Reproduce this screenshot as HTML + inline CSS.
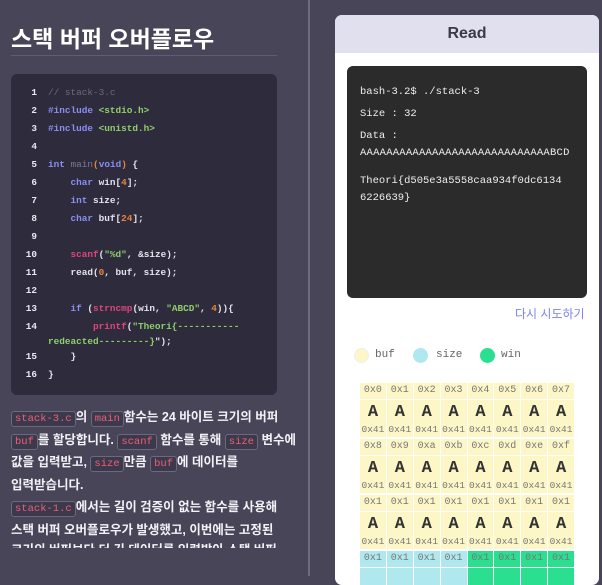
<!DOCTYPE html>
<html><head><meta charset="utf-8"><style>
*{margin:0;padding:0;box-sizing:border-box}
body{width:602px;height:576px;overflow:hidden;background:#494559;font-family:"Liberation Sans","Noto Sans CJK KR",sans-serif;position:relative}
.div{position:absolute;left:308px;top:0;width:2px;height:576px;background:#6d6a80}
h1{position:absolute;left:11px;top:20px;font-size:23px;color:#fff;font-weight:bold;letter-spacing:0px}
.hr{position:absolute;left:11px;top:55px;width:266px;height:1px;background:#605c72}
.code{position:absolute;left:11px;top:74px;width:266px;height:321px;background:#2d2b3c;border-radius:6px;font-family:"Liberation Mono",monospace;font-size:9.4px;color:#e4e4ee;font-weight:bold}
.ln{position:absolute;left:0;width:26px;text-align:right;color:#e8e8f0}
.cl{position:absolute;left:37px;white-space:pre}
.cm{color:#6c6a80;font-weight:normal}.kw{color:#8a8ff0}.st{color:#8fcf6a}.nm{color:#e8843a}.fn{color:#e0457b}.mn{color:#7d7a90;font-weight:normal}
.p{position:absolute;left:11px;width:290px;color:#f2f2f6;font-size:12.5px;font-weight:bold;line-height:20.5px;white-space:nowrap;overflow:hidden}
.ic{font-family:"Liberation Mono",monospace;font-size:10.5px;color:#ec5f72;font-weight:normal;border:1px solid #6c6880;border-radius:3px;padding:1px 3px;background:#3d394d}
.card{position:absolute;left:335px;top:15px;width:264px;height:570px;background:#fff;border-radius:7px;overflow:hidden}
.hd{height:38px;background:#e1e0ee;text-align:center;font-size:16px;font-weight:bold;color:#3a3a48;line-height:38px}
.term{position:absolute;left:12px;top:51px;width:240px;height:232px;background:#2b2b2b;border-radius:6px;font-family:"Liberation Mono",monospace;font-size:10.5px;color:#eee}
.term div{position:absolute;left:13px;white-space:pre}
.retry{position:absolute;left:180px;top:290px;color:#7e82f2;font-size:12px}
.lg{position:absolute;top:333px;width:15px;height:15px;border-radius:50%}
.lt{position:absolute;top:334px;font-family:"Liberation Mono",monospace;font-size:11px;color:#666}
.grid{position:absolute;left:25px;top:368px;width:214px;display:grid;grid-template-columns:repeat(8,1fr);column-gap:1px;background:#fff}
.h{height:16px;font-family:"Liberation Mono",monospace;font-size:10px;color:#777;text-align:center;line-height:16px;overflow:hidden;margin-bottom:1px}
.a{height:37px;font-family:"Liberation Mono",monospace;text-align:center;margin-bottom:2px;overflow:hidden}
.a b{display:block;font-size:17px;color:#333;line-height:22px;padding-top:2px}
.a i{display:block;font-style:normal;font-size:9.5px;color:#777;line-height:12px}
.y{background:#fdf6c6}.c{background:#b0e8f0}.g{background:#2adf90}
</style></head><body>
<div class="div"></div>
<h1>스택 버퍼 오버플로우</h1>
<div class="hr"></div>
<div class="code">
<div class="ln" style="top:13px">1</div><div class="cl" style="top:13px"><span class="cm">// stack-3.c</span></div>
<div class="ln" style="top:31px">2</div><div class="cl" style="top:31px"><span class="kw">#include</span> <span class="st">&lt;stdio.h&gt;</span></div>
<div class="ln" style="top:49px">3</div><div class="cl" style="top:49px"><span class="kw">#include</span> <span class="st">&lt;unistd.h&gt;</span></div>
<div class="ln" style="top:67px">4</div>
<div class="ln" style="top:85px">5</div><div class="cl" style="top:85px"><span class="kw">int</span> <span class="mn">main</span><span class="nm">(</span><span class="kw">void</span><span class="nm">)</span> {</div>
<div class="ln" style="top:103px">6</div><div class="cl" style="top:103px">    <span class="kw">char</span> win[<span class="nm">4</span>];</div>
<div class="ln" style="top:121px">7</div><div class="cl" style="top:121px">    <span class="kw">int</span> size;</div>
<div class="ln" style="top:139px">8</div><div class="cl" style="top:139px">    <span class="kw">char</span> buf[<span class="nm">24</span>];</div>
<div class="ln" style="top:157px">9</div>
<div class="ln" style="top:175px">10</div><div class="cl" style="top:175px">    <span class="fn">scanf</span>(<span class="st">"%d"</span>, &amp;size);</div>
<div class="ln" style="top:193px">11</div><div class="cl" style="top:193px">    read(<span class="nm">0</span>, buf, size);</div>
<div class="ln" style="top:211px">12</div>
<div class="ln" style="top:229px">13</div><div class="cl" style="top:229px">    <span class="kw">if</span> (<span class="fn">strncmp</span>(win, <span class="st">"ABCD"</span>, <span class="nm">4</span>)){</div>
<div class="ln" style="top:247px">14</div><div class="cl" style="top:247px">        <span class="fn">printf</span>(<span class="st">"Theori{-----------</span></div>
<div class="cl" style="top:262px"><span class="st">redeacted---------}</span>");</div>
<div class="ln" style="top:277px">15</div><div class="cl" style="top:277px">    }</div>
<div class="ln" style="top:295px">16</div><div class="cl" style="top:295px">}</div>
</div>
<div class="p" style="top:407px;height:86px"><span class="ic">stack-3.c</span>의 <span class="ic">main</span>함수는 24 바이트 크기의 버퍼<br><span class="ic">buf</span>를 할당합니다. <span class="ic">scanf</span> 함수를 통해 <span class="ic">size</span> 변수에<br>값을 입력받고, <span class="ic">size</span>만큼 <span class="ic">buf</span>에 데이터를<br>입력받습니다.</div>
<div class="p" style="top:497px;height:51px"><span class="ic">stack-1.c</span>에서는 길이 검증이 없는 함수를 사용해<br>스택 버퍼 오버플로우가 발생했고, 이번에는 고정된<br>크기의 버퍼보다 더 긴 데이터를 입력받아 스택 버퍼</div>
<div class="card">
<div class="hd">Read</div>
<div class="term">
<div style="top:20px">bash-3.2$ ./stack-3</div>
<div style="top:42px">Size : 32</div>
<div style="top:64px">Data :</div>
<div style="top:81px;letter-spacing:0.25px">AAAAAAAAAAAAAAAAAAAAAAAAAAAAABCD</div>
<div style="top:109px">Theori{d505e3a5558caa934f0dc6134</div>
<div style="top:126px">6226639}</div>
</div>
<div class="retry">다시 시도하기</div>
<div class="lg" style="left:19px;background:#fdf6c6;border:1px solid #eee"></div><div class="lt" style="left:40px">buf</div>
<div class="lg" style="left:78px;background:#b0e8f0"></div><div class="lt" style="left:101px">size</div>
<div class="lg" style="left:145px;background:#2adf90"></div><div class="lt" style="left:166px">win</div>
<div class="grid">
<div class="h y">0x0</div><div class="h y">0x1</div><div class="h y">0x2</div><div class="h y">0x3</div><div class="h y">0x4</div><div class="h y">0x5</div><div class="h y">0x6</div><div class="h y">0x7</div>
<div class="a y"><b>A</b><i>0x41</i></div><div class="a y"><b>A</b><i>0x41</i></div><div class="a y"><b>A</b><i>0x41</i></div><div class="a y"><b>A</b><i>0x41</i></div><div class="a y"><b>A</b><i>0x41</i></div><div class="a y"><b>A</b><i>0x41</i></div><div class="a y"><b>A</b><i>0x41</i></div><div class="a y"><b>A</b><i>0x41</i></div>
<div class="h y">0x8</div><div class="h y">0x9</div><div class="h y">0xa</div><div class="h y">0xb</div><div class="h y">0xc</div><div class="h y">0xd</div><div class="h y">0xe</div><div class="h y">0xf</div>
<div class="a y"><b>A</b><i>0x41</i></div><div class="a y"><b>A</b><i>0x41</i></div><div class="a y"><b>A</b><i>0x41</i></div><div class="a y"><b>A</b><i>0x41</i></div><div class="a y"><b>A</b><i>0x41</i></div><div class="a y"><b>A</b><i>0x41</i></div><div class="a y"><b>A</b><i>0x41</i></div><div class="a y"><b>A</b><i>0x41</i></div>
<div class="h y">0x1</div><div class="h y">0x1</div><div class="h y">0x1</div><div class="h y">0x1</div><div class="h y">0x1</div><div class="h y">0x1</div><div class="h y">0x1</div><div class="h y">0x1</div>
<div class="a y"><b>A</b><i>0x41</i></div><div class="a y"><b>A</b><i>0x41</i></div><div class="a y"><b>A</b><i>0x41</i></div><div class="a y"><b>A</b><i>0x41</i></div><div class="a y"><b>A</b><i>0x41</i></div><div class="a y"><b>A</b><i>0x41</i></div><div class="a y"><b>A</b><i>0x41</i></div><div class="a y"><b>A</b><i>0x41</i></div>
<div class="h c">0x1</div><div class="h c">0x1</div><div class="h c">0x1</div><div class="h c">0x1</div><div class="h g">0x1</div><div class="h g">0x1</div><div class="h g">0x1</div><div class="h g">0x1</div>
<div class="a c"></div><div class="a c"></div><div class="a c"></div><div class="a c"></div><div class="a g"></div><div class="a g"></div><div class="a g"></div><div class="a g"></div>
</div>
</div>
</body></html>
